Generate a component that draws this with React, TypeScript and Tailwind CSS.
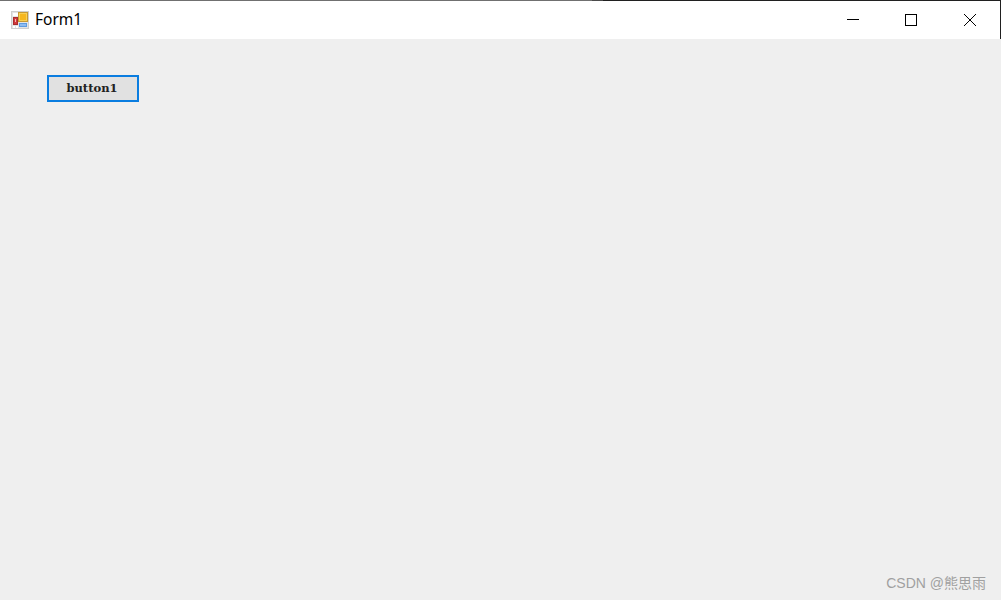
function FormIcon() {
  return (
    <svg width="18" height="18" viewBox="0 0 18 18" className="shrink-0">
      <rect x="0" y="0" width="18" height="18" fill="#cfcfcf" />
      <rect x="1" y="1" width="16" height="16" fill="#e4e4e4" />
      <rect x="2" y="2" width="5" height="3" fill="#ffffff" />
      <rect x="7.5" y="1.5" width="9" height="9" fill="#f7cf55" stroke="#c79a33" />
      <rect x="9" y="3" width="6" height="6" fill="#f6b71f" />
      <rect x="2.5" y="6.5" width="4" height="7" fill="#d2393b" stroke="#a82c2e" />
      <rect x="4" y="8" width="1" height="3" fill="#f3b5b5" />
      <rect x="8" y="12" width="8" height="4" fill="#5d9be2" />
      <rect x="9" y="13" width="6" height="2" fill="#8fbcf0" />
      <rect x="2" y="15" width="2" height="2" fill="#ffffff" />
      <rect x="5" y="15" width="2" height="2" fill="#ffffff" />
    </svg>
  )
}

export default function App() {
  return (
    <div className="relative flex flex-col h-[600px] w-[1001px] overflow-hidden bg-[#efefef] font-['Liberation_Sans',sans-serif]">
      {/* Window top edge */}
      <div className="flex h-px shrink-0">
        <div className="w-[592px] bg-[#707070]" />
        <div className="w-[11px] bg-[#4a4a4a]" />
        <div className="flex-1 bg-[#202020]" />
      </div>

      {/* Title bar */}
      <div className="flex h-[38px] shrink-0 items-center bg-white pl-[11px] pr-[3px]">
        <FormIcon />
        <span className="ml-[6px] font-['Noto_Sans',sans-serif] text-[15.5px] leading-none text-black">Form1</span>
        <div className="ml-auto flex h-full items-center">
          <button className="flex h-full w-[58px] items-center justify-center">
            <svg width="14" height="14" viewBox="0 0 14 14">
              <path d="M1 6.5h12" stroke="#000" fill="none" />
            </svg>
          </button>
          <button className="flex h-full w-[58px] items-center justify-center">
            <svg width="14" height="14" viewBox="0 0 14 14">
              <rect x="1.5" y="1.5" width="11" height="11" stroke="#000" fill="none" />
            </svg>
          </button>
          <button className="flex h-full w-[58px] items-center justify-center pl-[2px]">
            <svg width="14" height="14" viewBox="0 0 14 14">
              <path d="M1 1l12 12M13 1L1 13" stroke="#000" fill="none" />
            </svg>
          </button>
        </div>
      </div>

      {/* Form body */}
      <div className="flex-1 pl-[47px] pt-[36px]">
        <button className="flex h-[27px] w-[92px] items-center justify-center border-2 border-[#0a7de0] bg-[#e1e1e1] pr-[2px] font-['DejaVu_Serif',serif] text-[11.5px] font-bold text-[#222222]">
          button1
        </button>
      </div>

      {/* Right window edge */}
      <div className="absolute right-0 top-0 h-[39px] w-px bg-[#202020]" />

      {/* Watermark */}
      <span className="absolute bottom-[8px] right-[15px] font-['Liberation_Sans','Noto_Sans_CJK_SC',sans-serif] text-[14px] leading-[18px] text-[#a0a0a0]">
        CSDN @熊思雨
      </span>
    </div>
  )
}
